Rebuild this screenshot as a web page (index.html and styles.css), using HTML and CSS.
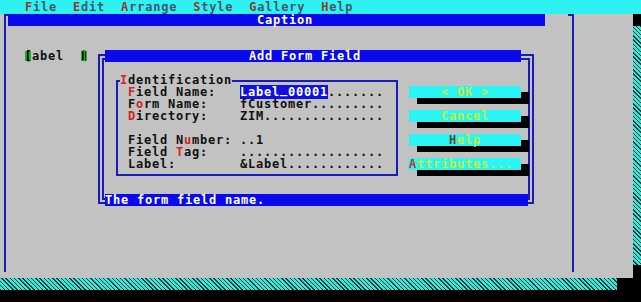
FILE: index.html
```html
<!DOCTYPE html>
<html lang="en">
<head>
    <meta charset="UTF-8">
    <title>Add Form Field</title>
    <link rel="stylesheet" href="styles.css">
</head>
<body>

    <div class="screen">
        <!-- Menu bar -->
        <div class="menubar">   <span class="mk">F</span>ile  <span class="mk">E</span>dit  <span class="mk">A</span>rrange  <span class="mk">S</span>tyle  <span class="mk">G</span>allery  <span class="mk">H</span>elp</div>

        <div class="desk">
            <div class="desk-main">
                <div class="window">
                    <div class="frame">
                        <div class="caption">Caption</div>

                        <div class="work">
                            <div class="field-label"><span class="brk">[</span>abel  <span class="brk brk-r">]</span></div>

                            <!-- Add Form Field dialog -->
                            <div class="dialog">
                                <div class="dlg-title">Add Form Field</div>

                                <div class="dlg-body">
                                    <div class="group">
                                        <div class="legend"><span class="hk">I</span>dentification</div>
                                        <div class="frow"><span class="flabel"><span class="hk">F</span>ield Name:</span><span class="sel">Label<span class="us">_</span>00001</span>.......</div>
                                        <div class="frow"><span class="flabel">F<span class="hk">o</span>rm Name:</span>fCustomer.........</div>
                                        <div class="frow"><span class="flabel"><span class="hk">D</span>irectory:</span>ZIM...............</div>
                                        <div class="frow"></div>
                                        <div class="frow"><span class="flabel">Field N<span class="hk">u</span>mber:</span>..1</div>
                                        <div class="frow"><span class="flabel">Field <span class="hk">T</span>ag:</span>..................</div>
                                        <div class="frow"><span class="flabel">Label:</span>&amp;Label............</div>
                                    </div>

                                    <div class="buttons">
                                        <div class="btn">&lt; OK &gt;</div>
                                        <div class="btn">Cancel</div>
                                        <div class="btn"><span class="bk-dark">H</span>elp</div>
                                        <div class="btn btn-left"><span class="bk-red">A</span>ttributes...</div>
                                    </div>
                                </div>

                                <div class="dlg-status">The form field name.</div>
                            </div>
                        </div>
                    </div>
                </div>
                <div class="shadow-right"></div>
            </div>
            <div class="shadow-bottom"></div>
        </div>
    </div>

</body>
</html>
```

FILE: styles.css
```css
/* Text mode screen: 8px columns, 12px rows */
body {
    margin: 0;
    background: #000;
    font-family: "DejaVu Sans Mono", "Liberation Mono", monospace;
    font-size: 12px;
    letter-spacing: 0.78px;
    font-weight: bold;
    line-height: 12px;
    color: #111;
}

.screen {
    width: 641px;
    height: 302px;
    overflow: hidden;
}

/* Menu bar */
.menubar {
    height: 14px;
    line-height: 14px;
    padding-left: 1px;
    background: #2ef2f2;
    color: #46566a;
    white-space: pre;
}

.mk {
    color: #96382c;
}

/* Desktop window with hatched shadow */
.desk-main {
    display: flex;
}

.window {
    width: 633px;
    height: 264px;
    padding-top: 6px;
    box-sizing: border-box;
    background: #c2c2c2;
}

.shadow-right {
    width: 8px;
    height: 264px;
    background:
        linear-gradient(#000, #000) top / 100% 12px no-repeat,
        linear-gradient(#000, #000) bottom / 100% 13px no-repeat,
        repeating-linear-gradient(45deg, #0d3b3b 0 1px, #3ae6da 1px 3px);
}

.shadow-bottom {
    width: 617px;
    height: 12px;
    background: repeating-linear-gradient(45deg, #0d3b3b 0 1px, #3ae6da 1px 3px);
}

.frame {
    margin-left: 4px;
    width: 570px;
    height: 258px;
    box-sizing: border-box;
    border-left: 2px solid #1c1cb4;
    border-right: 2px solid #1c1cb4;
    background:
        linear-gradient(#1c1cb4, #1c1cb4) left top / 4px 2px no-repeat,
        linear-gradient(#1c1cb4, #1c1cb4) right top / 4px 2px no-repeat;
}

.caption {
    margin: -6px 0 0 2px;
    width: 537px;
    height: 12px;
    padding-left: 249px;
    box-sizing: border-box;
    background: #0a0aec;
    color: #fff;
}

/* Work area: label on the form and the dialog */
.work {
    display: flex;
    align-items: flex-start;
    margin-top: 24px;
    padding-left: 18px;
}

.field-label {
    width: 74px;
    white-space: pre;
}

.brk {
    display: inline-block;
    width: 8px;
    letter-spacing: 0;
    text-align: center;
    color: #000;
    background: linear-gradient(to right, transparent 1px, #2aa82a 1px 7px, transparent 7px) center / 100% 10px no-repeat;
}

.brk-r {
    color: #2aa82a;
    background: linear-gradient(to right, transparent 1px, #2aa82a 1px 2px, #0c0c0c 2px 6px, #2aa82a 6px 7px, transparent 7px) center / 100% 10px no-repeat;
}

.dialog {
    margin-top: 4px;
    width: 436px;
    box-sizing: border-box;
    border: 6px double #1c1cb4;
}

.dlg-title {
    margin: -10px 0 0 1px;
    width: 416px;
    height: 12px;
    padding-left: 144px;
    box-sizing: border-box;
    background: #0a0aec;
    color: #fff;
}

.dlg-body {
    display: flex;
    align-items: flex-start;
    margin-top: 18px;
    padding-left: 12px;
}

/* Identification group box */
.group {
    width: 282px;
    box-sizing: border-box;
    border: 2px solid #1c1cb4;
    padding-bottom: 4px;
}

.legend {
    width: max-content;
    margin: -8px 0 0 2px;
    background: #c2c2c2;
    white-space: pre;
}

.frow {
    height: 12px;
    padding-left: 10px;
    white-space: pre;
}

.flabel {
    display: inline-block;
    width: 112px;
}

.hk {
    color: #d42222;
}

.sel {
    background: #1010e0;
    color: #fff;
}

.us {
    line-height: 0;
    vertical-align: 3px;
}

/* Push buttons */
.buttons {
    display: flex;
    flex-direction: column;
    gap: 12px;
    margin: 6px 0 0 11px;
}

.btn {
    width: 112px;
    height: 12px;
    background: #2af4f4;
    color: #c4ea3a;
    text-align: center;
    white-space: pre;
    box-shadow: 8px 6px 0 #000;
}

.btn-left {
    text-align: left;
}

.bk-dark {
    color: #743838;
}

.bk-red {
    color: #c83232;
}

.dlg-status {
    margin: 18px 0 -8px 1px;
    width: 423px;
    height: 12px;
    background: #0a0aec;
    color: #fff;
    white-space: pre;
}
```
